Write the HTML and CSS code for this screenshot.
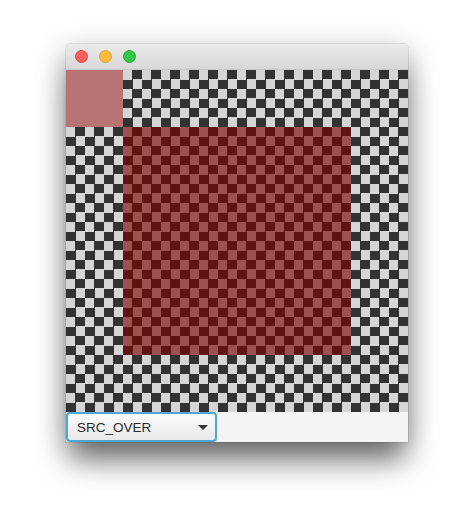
FILE: index.html
```
<!DOCTYPE html>
<html>
<head>
<meta charset="utf-8">
<link rel="stylesheet" href="styles.css">
</head>
<body>
<div class="window">
  <div class="titlebar">
    <span class="light red"></span>
    <span class="light yellow"></span>
    <span class="light green"></span>
  </div>
  <div class="board">
    <div class="pink"></div>
    <div class="overlay"></div>
  </div>
  <div class="bottombar">
    <div class="combo">
      <span class="combo-text">SRC_OVER</span>
      <span class="arrow"></span>
    </div>
  </div>
</div>
</body>
</html>
```
FILE: styles.css
```
html, body {
  margin: 0;
  background: #ffffff;
}
body {
  padding: 44px 0 60px 66px;
  font-family: "Liberation Sans", Arial, sans-serif;
}
.window {
  width: 342px;
  border-radius: 5px 5px 0 0;
  box-shadow: 0 22px 30px -4px rgba(0,0,0,0.5), 0 6px 30px rgba(0,0,0,0.25), 0 0 0 1px rgba(0,0,0,0.08);
  background: #f4f4f4;
}
.titlebar {
  height: 26px;
  box-sizing: border-box;
  border-radius: 5px 5px 0 0;
  background: linear-gradient(#ebebeb, #d8d8d8);
  border-bottom: 1px solid #c8c8c8;
  display: flex;
  align-items: center;
  gap: 11px;
  padding-left: 9px;
}
.light {
  width: 13px;
  height: 13px;
  border-radius: 50%;
  box-sizing: border-box;
}
.red { background: #fc605c; border: 0.5px solid #de4a45; }
.yellow { background: #fdbc40; border: 0.5px solid #dea034; }
.green { background: #34c84a; border: 0.5px solid #27aa35; }
.board {
  width: 342px;
  height: 342px;
  display: grid;
  grid-template-columns: repeat(36, 9.5px);
  grid-template-rows: repeat(36, 9.5px);
  background: conic-gradient(#323232 0 25%, #d5d5d5 0 50%, #323232 0 75%, #d5d5d5 0);
  background-size: 19px 19px;
}
.pink {
  grid-area: 1 / 1 / 7 / 7;
  background: #b87474;
}
.overlay {
  grid-area: 7 / 7 / 31 / 31;
  background: rgba(125, 0, 0, 0.62);
}
.bottombar {
  height: 30px;
  display: flex;
  background: #f4f4f4;
}
.combo {
  width: 151px;
  height: 30px;
  box-sizing: border-box;
  border: 2px solid #4fa6d8;
  border-radius: 4px;
  background: linear-gradient(#fbfbfb, #e9e9e9);
  display: flex;
  align-items: center;
  justify-content: space-between;
  padding: 0 6px 0 9px;
}
.combo-text {
  font-size: 13.5px;
  color: #2a2a2a;
}
.arrow {
  width: 0;
  height: 0;
  border-left: 5px solid transparent;
  border-right: 5px solid transparent;
  border-top: 5px solid #333;
  margin-right: 1px;
}
```
